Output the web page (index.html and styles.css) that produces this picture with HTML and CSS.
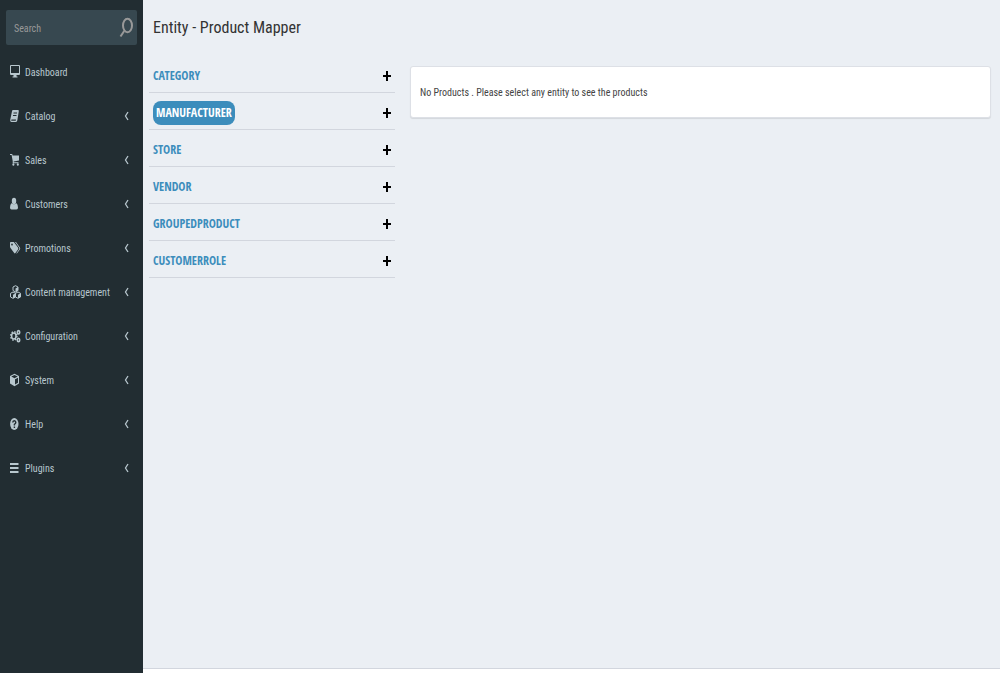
FILE: index.html
```html
<!DOCTYPE html>
<html lang="en">

<head>
  <meta charset="UTF-8">
  <meta name="viewport" content="width=device-width, initial-scale=1.0">
  <title>Entity - Product Mapper</title>
  <link rel="stylesheet" href="styles.css">
</head>

<body>
  <aside class="sidebar">
    <form class="search" role="search">
      <input type="text" class="search-input" placeholder="Search" aria-label="Search">
      <button type="submit" class="search-button" aria-label="Search">
        <svg width="15" height="22" viewBox="0 0 15 22"><ellipse cx="8.5" cy="8.5" rx="4.500" ry="6.800" /><path d="M5.2 14L1.5 19.5" /></svg>
      </button>
    </form>
    <ul class="menu">
      <li><a href="#">
        <svg class="icon" viewBox="0 0 11 14"><path fill-rule="evenodd" d="M1 0h8q1 0 1 1v8q0 1-1 1H6.500v1.500h1v1h-5v-1h1V10H1Q0 10 0 9V1q0-1 1-1zM1 1v7h8V1z" /></svg>
        <span>Dashboard</span></a></li>
      <li><a href="#">
        <svg class="icon" viewBox="0 0 11 14"><path fill-rule="evenodd" d="M3 1h5q1 0 .8 1.200L7.400 11q-.3 2-1.500 2H1.500Q0 13 .2 11L2 2.200Q2.200 1 3 1zM3.600 3.500l-.2 1h3.500l.2-1zM3.100 6l-.2 1h3.500l.2-1zM1.400 10.500l-.2 1.300h4.500l.4-1.300z" /></svg>
        <span>Catalog</span>
        <svg class="arrow" viewBox="0 0 5 10"><path d="M4 1L1.500 5l2.500 4" /></svg></a></li>
      <li><a href="#">
        <svg class="icon" viewBox="0 0 11 14"><path d="M0 1h2.200l.4 1.500H9v5L3.700 8.400v.8H8.500v1H2.700V8L1.600 2H0z" /><ellipse cx="3.400" cy="11.500" rx="1" ry="1.300" /><ellipse cx="7.800" cy="11.500" rx="1" ry="1.300" /></svg>
        <span>Sales</span>
        <svg class="arrow" viewBox="0 0 5 10"><path d="M4 1L1.500 5l2.500 4" /></svg></a></li>
      <li><a href="#">
        <svg class="icon" viewBox="0 0 11 14"><ellipse cx="4" cy="4" rx="2.200" ry="3.300" /><path d="M1.800 6Q4 8.500 6.200 6 8 7 8 10.500q0 2-1.500 2h-5Q0 12.500 0 10.500 0 7 1.800 6z" /></svg>
        <span>Customers</span>
        <svg class="arrow" viewBox="0 0 5 10"><path d="M4 1L1.500 5l2.500 4" /></svg></a></li>
      <li><a href="#">
        <svg class="icon" viewBox="0 0 11 14"><path fill-rule="evenodd" d="M0 2q0-1 .8-1h3L8 6.500q.6 1 0 1.900L5.400 12q-.6.8-1.200 0L.5 7Q0 6.200 0 5.500zM2 2.500a.8 1 0 1 0 .01 0z" /><path d="M5 1h1l3.900 5.500q.7 1 0 1.900L7.300 12q-.5.700-1 .2L9 8.500q.7-1 0-2z" /></svg>
        <span>Promotions</span>
        <svg class="arrow" viewBox="0 0 5 10"><path d="M4 1L1.500 5l2.500 4" /></svg></a></li>
      <li><a href="#">
        <svg class="icon" viewBox="0 0 11 14"><g class="cubes"><path d="M5.500.700L8 2v3.500L5.500 7 3 5.500V2zM3 7l2.500 1.300V12L3 13.300.5 12V8.300zM8 7l2.500 1.300V12L8 13.300 5.500 12V8.300z" /></g><path d="M5.500 3.500L8 2v3.500L5.500 7zM3 9.700l2.500-1.400V12L3 13.300zM8 9.700l2.500-1.400V12L8 13.300z" /></svg>
        <span>Content management</span>
        <svg class="arrow" viewBox="0 0 5 10"><path d="M4 1L1.500 5l2.500 4" /></svg></a></li>
      <li><a href="#">
        <svg class="icon" viewBox="0 0 11 14"><g class="gear"><ellipse cx="3.800" cy="7" rx="2.200" ry="3" /></g><g class="teeth"><ellipse cx="3.800" cy="7" rx="3.100" ry="4.200" /></g><g class="cog"><ellipse cx="8.500" cy="3.300" rx="1.200" ry="1.700" /><ellipse cx="8.500" cy="10.900" rx="1.200" ry="1.700" /></g></svg>
        <span>Configuration</span>
        <svg class="arrow" viewBox="0 0 5 10"><path d="M4 1L1.500 5l2.500 4" /></svg></a></li>
      <li><a href="#">
        <svg class="icon" viewBox="0 0 11 14"><path fill-rule="evenodd" d="M4.500.800L9 3v7.500l-4.500 2.800L0 10.500V3zM4.500 2L1.300 3.500l3.200 1.700 3.200-1.700zM5 6.300v5.300l3-1.900V4.700z" /></svg>
        <span>System</span>
        <svg class="arrow" viewBox="0 0 5 10"><path d="M4 1L1.500 5l2.500 4" /></svg></a></li>
      <li><a href="#">
        <svg class="icon" viewBox="0 0 11 14"><ellipse cx="4.300" cy="7" rx="4.200" ry="6" /><path class="mark" d="M2.800 5.500Q2.800 3.700 4.300 3.700T5.800 5.500Q5.800 6.500 4.400 7.300V8.500M4.400 9.500V11" /></svg>
        <span>Help</span>
        <svg class="arrow" viewBox="0 0 5 10"><path d="M4 1L1.500 5l2.500 4" /></svg></a></li>
      <li><a href="#">
        <svg class="icon" viewBox="0 0 11 14"><path d="M0 2h8.500v2H0zM0 6h8.500v2H0zM0 10h8.500v2H0z" /></svg>
        <span>Plugins</span>
        <svg class="arrow" viewBox="0 0 5 10"><path d="M4 1L1.500 5l2.500 4" /></svg></a></li>
    </ul>
  </aside>

  <div class="wrapper">
    <main class="content">
      <h1>Entity - Product Mapper</h1>
      <div class="mapper">
        <ul class="entities">
          <li><a href="#">CATEGORY</a><button type="button" aria-label="Expand category"><svg viewBox="0 0 8 12"><path d="M4 1v10M0 6h8" /></svg></button></li>
          <li><a href="#" class="active">MANUFACTURER</a><button type="button" aria-label="Expand manufacturer"><svg viewBox="0 0 8 12"><path d="M4 1v10M0 6h8" /></svg></button></li>
          <li><a href="#">STORE</a><button type="button" aria-label="Expand store"><svg viewBox="0 0 8 12"><path d="M4 1v10M0 6h8" /></svg></button></li>
          <li><a href="#">VENDOR</a><button type="button" aria-label="Expand vendor"><svg viewBox="0 0 8 12"><path d="M4 1v10M0 6h8" /></svg></button></li>
          <li><a href="#">GROUPEDPRODUCT</a><button type="button" aria-label="Expand groupedproduct"><svg viewBox="0 0 8 12"><path d="M4 1v10M0 6h8" /></svg></button></li>
          <li><a href="#">CUSTOMERROLE</a><button type="button" aria-label="Expand customerrole"><svg viewBox="0 0 8 12"><path d="M4 1v10M0 6h8" /></svg></button></li>
        </ul>
        <div class="panel">No Products . Please select any entity to see the products</div>
      </div>
    </main>
    <footer class="footer"></footer>
  </div>
</body>

</html>
```
FILE: styles.css
```css
* {
  box-sizing: border-box;
}

body {
  display: flex;
  min-height: 100vh;
  margin: 0;
  background-color: #ebeff4;
  color: #444;
  font-family: "Roboto Condensed", Roboto, sans-serif;
  font-size: 10px;
  line-height: 20px;
}

ul {
  list-style: none;
  margin: 0;
  padding: 0;
}

a {
  text-decoration: none;
}

button {
  padding: 0;
  border: none;
  background: none;
  cursor: pointer;
}

/* Sidebar */
.sidebar {
  flex: none;
  width: 143px;
  padding-top: 10px;
  background-color: #222d32;
}

.search {
  display: flex;
  align-items: center;
  height: 35px;
  margin: 0 6px 5px;
  border-radius: 2px;
  background-color: #374850;
}

.search-input {
  flex: 1;
  min-width: 0;
  height: 35px;
  padding: 2px 8px 0;
  border: none;
  outline: none;
  background: none;
  color: #b8c7ce;
  font: inherit;
}

.search-input::placeholder {
  color: #999;
}

.search-button {
  display: flex;
  margin-right: 3px;
}

.search-button svg {
  fill: none;
  stroke: #999;
  stroke-width: 2;
}

.menu a {
  display: flex;
  align-items: center;
  height: 44px;
  padding: 0 14px 0 10px;
  color: #b8c7ce;
  white-space: nowrap;
}

.menu span {
  padding-top: 2px;
}

.icon {
  flex: none;
  width: 11px;
  height: 14px;
  margin-right: 4px;
  fill: #b8c7ce;
}

.cubes,
.gear,
.teeth,
.cog {
  fill: none;
  stroke: #b8c7ce;
}

.gear {
  stroke-width: 1.500;
}

.teeth {
  stroke-width: 1.500;
  stroke-dasharray: 1.400 1.500;
}

.cog {
  stroke-width: 1.600;
}

.mark {
  fill: none;
  stroke: #222d32;
  stroke-width: 1.400;
}

.arrow {
  flex: none;
  width: 5px;
  height: 10px;
  margin-left: auto;
  fill: none;
  stroke: #b8c7ce;
  stroke-width: 1.300;
}

/* Content */
.wrapper {
  display: flex;
  flex: 1;
  flex-direction: column;
  min-width: 0;
}

.content {
  flex: 1;
  padding: 14px 9px 14px 6px;
}

h1 {
  margin: 0 0 14px;
  padding-left: 4px;
  color: #333;
  font-size: 16px;
  font-weight: normal;
  line-height: 28px;
}

.mapper {
  display: grid;
  grid-template-columns: 246px 1fr;
  gap: 15px;
  align-items: start;
}

.entities li {
  display: flex;
  align-items: center;
  justify-content: space-between;
  height: 37px;
  padding: 3px 4px 0;
  border-bottom: 1px solid #d2d6de;
}

.entities a {
  color: #3c8dbc;
  font-family: "Open Sans Condensed", "Roboto Condensed", sans-serif;
  font-size: 12px;
  font-weight: bold;
  line-height: 24px;
}

.entities .active {
  padding: 0 3px;
  border-radius: 8px;
  background-color: #3c8dbc;
  color: #fff;
}

.entities svg {
  display: block;
  width: 8px;
  height: 12px;
  stroke: #000;
  stroke-width: 2;
}

.panel {
  margin-top: 10px;
  padding: 16px 9px 14px;
  border: 1px solid #dde0e6;
  border-radius: 3px;
  background-color: #fff;
  box-shadow: 0 1px 1px rgba(0, 0, 0, 0.1);
}

.footer {
  height: 5px;
  border-top: 1px solid #d2d6de;
  background-color: #fff;
}
```
